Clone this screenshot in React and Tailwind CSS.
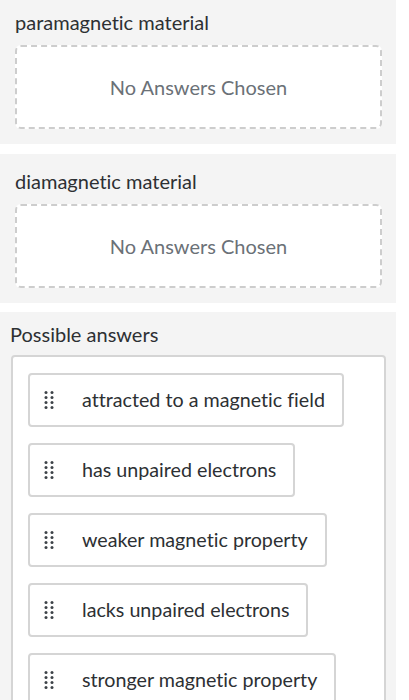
import React from 'react';

const Grip = () => (
  <svg width="11" height="20" viewBox="0 0 11 20" className="shrink-0 text-[#3e4348]">
    {[2.5, 7.5, 12.5, 17.5].map((y) => (
      <g key={y}>
        <circle cx="2" cy={y} r="1.5" fill="currentColor" />
        <circle cx="8" cy={y} r="1.5" fill="currentColor" />
      </g>
    ))}
  </svg>
);

const DropZone = ({ label }) => (
  <div className="bg-[#f4f4f4] w-[396px] pl-[15px] pr-[14px] pt-[14px] pb-[15px]">
    <div className="text-[20px] leading-[26px] text-[#2d3033]">{label}</div>
    <div className="mt-[10px] h-[84px] rounded-[6px] border-2 border-dashed border-[#cdcdcd] bg-white flex items-center justify-center">
      <span className="text-[20px] text-[#6b7177]">No Answers Chosen</span>
    </div>
  </div>
);

const answers = [
  'attracted to a magnetic field',
  'has unpaired electrons',
  'weaker magnetic property',
  'lacks unpaired electrons',
  'stronger magnetic property',
];

export default function App() {
  return (
    <div className="w-[409px] h-[700px] overflow-hidden bg-white">
      <div
        className="-mt-[5px] [font-variant-ligatures:none]"
        style={{ fontFamily: 'Lato, "Open Sans", sans-serif' }}
      >
        <DropZone label="paramagnetic material" />
        <div className="h-[10px]" />
        <DropZone label="diamagnetic material" />
        <div className="h-[9px]" />

        {/* Possible answers */}
        <div className="bg-[#f4f4f4] w-[396px] pt-[9px] pl-[10px] pr-[10px] pb-4">
          <div className="text-[20px] leading-[26px] text-[#2d3033]">Possible answers</div>
          <div className="mt-[8px] ml-px rounded-[4px] border-2 border-[#d5d5d5] bg-white pt-[16px] pl-[15px] pr-4 pb-4 flex flex-col items-start gap-[16px]">
            {answers.map((a) => (
              <div
                key={a}
                className="h-[54px] flex items-center gap-[27px] pl-[14px] pr-[17px] rounded-[4px] border-2 border-[#d5d5d5] bg-white"
              >
                <Grip />
                <span className="text-[19.7px] text-[#2d3033] whitespace-nowrap">{a}</span>
              </div>
            ))}
          </div>
        </div>
      </div>
    </div>
  );
}
